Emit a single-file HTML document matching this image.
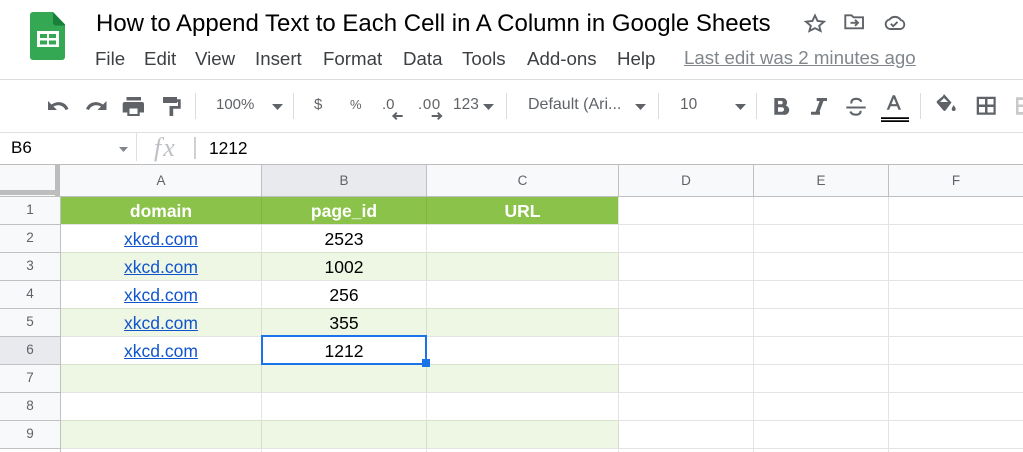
<!DOCTYPE html>
<html><head><meta charset="utf-8">
<style>
html,body{margin:0;padding:0;background:#fff}
body{width:1023px;height:452px;overflow:hidden;position:relative;font-family:"Liberation Sans",sans-serif}
.t{position:absolute;white-space:nowrap}
.b{position:absolute}
.m{top:48px;font-size:18.7px;line-height:22px;color:#3c4043}
.tb{top:95px;font-size:15px;line-height:20px;color:#5f6368}
.ch{top:165px;height:31px;line-height:31px;text-align:center;font-size:13.5px;color:#5f6368;position:absolute;background:#f8f9fa}
.rh{left:0;width:60px;height:27px;line-height:26px;text-align:center;font-size:13.5px;color:#5f6368;position:absolute;background:#f8f9fa}
.c{position:absolute;height:27px;line-height:28px;text-align:center;font-size:17.5px;color:#000}
.l{color:#1155cc;text-decoration:underline}
.h{color:#fff;font-weight:bold}
svg{position:absolute;overflow:visible}
</style></head><body>

<svg style="left:30px;top:12px" width="36" height="49" viewBox="0 0 36 49">
<path d="M3 0H23L35 12.500V45a3 3 0 0 1-3 3H3a3 3 0 0 1-3-3V3a3 3 0 0 1 3-3z" fill="#34a853"/>
<path d="M23 0L35 12.500V13.500H26a3 3 0 0 1-3-3z" fill="#188038"/>
<path d="M7 19H29V35H7z" fill="#fff"/>
<path d="M10 22H17V26H10zM19 22H26V26H19zM10 28.500H17V32.500H10zM19 28.500H26V32.500H19z" fill="#34a853"/>
</svg>

<div class="t" style="left:96px;top:9px;font-size:24px;line-height:30px;color:#000">How to Append Text to Each Cell in A Column in Google Sheets</div>

<div class="t m" style="left:95px">File</div>
<div class="t m" style="left:144px">Edit</div>
<div class="t m" style="left:195px">View</div>
<div class="t m" style="left:255px">Insert</div>
<div class="t m" style="left:323px">Format</div>
<div class="t m" style="left:403px">Data</div>
<div class="t m" style="left:462px">Tools</div>
<div class="t m" style="left:527px">Add-ons</div>
<div class="t m" style="left:617px">Help</div>
<div class="t" style="left:684px;top:47px;font-size:18.7px;line-height:22px;color:#80868b;text-decoration:underline">Last edit was 2 minutes ago</div>

<div class="b" style="left:0;top:79px;width:1023px;height:1px;background:#dadce0"></div>

<!-- icons, absolute page coordinates -->
<svg style="left:0;top:0" width="1023" height="452" viewBox="0 0 1023 452">
<g fill="none" stroke="#5f6368" stroke-width="1.900">
<path d="M815 15.500L817.600 21 824 21.700 819.200 25.800 820.600 31 815 28.200 809.400 31 810.800 25.800 806 21.700 812.400 21z"/>
<path d="M845.300 15.300H851.500L853.500 17.300H863V28.300H845.300z"/>
<path d="M850.500 22.800H858M855 19.800l3 3-3 3"/>
<path d="M890.500 29a4.800 4.800 0 0 1-1-9.500A7 7 0 0 1 900.800 20a4.600 4.600 0 0 1-.3 9z"/>
<path d="M890.800 23.800l2.400 2.400 4.300-4.300"/>
<path d="M402.700 116H393.500M396.800 112.700L393.300 116 396.800 119.300"/>
<path d="M431.700 116H441M437.700 112.700L441.200 116 437.700 119.300"/>
</g>
<g fill="#5f6368">
<path d="M48 101V110H57L53.500 106.500C57 104.500 63 104.500 65.500 110L68.500 109C66 102 58 100 51.500 104.500Z"/>
<path d="M106.500 101V110H97.500L101 106.500C97.500 104.500 91.500 104.500 89 110L86 109C88.500 102 96.500 100 103 104.500Z"/>
<path d="M126.500 97H141V100.500H126.500z"/>
<path fill-rule="evenodd" d="M125 102H142a2 2 0 0 1 2 2v8.500h-4.300V116H127.300v-3.500H122.700V104a2 2 0 0 1 2.300-2zM129.500 108.500v5.500h8v-5.500z"/>
<path d="M163 97H177V99.300H180.700V108.700H173.200V116H169.500V106H178V102H177V103H163z"/>

<path fill-rule="evenodd" d="M774.300 98H782a4.500 4.500 0 0 1 3.900 7.500A4.700 4.700 0 0 1 783 114.700H774.300zM778 100.900V104.300H781a1.700 1.700 0 0 0 0-3.400zM778 107.200V111.700H781.800a2.200 2.200 0 0 0 0-4.500z"/>
<path d="M816.700 98H827V101H823.500L819.500 111.700H820V114.700H811V111.700H815.600L819.600 101H816.700z"/>
<path d="M846.300 106.500H865.700V108.500H846.300z"/>
<path fill-rule="evenodd" d="M886.700 109.700L892.700 95.300H895L901 109.700H898.500L897.100 106.200H890.600L889.200 109.700zM891.500 104.100H896.200L893.850 98.200z"/>
<path d="M881 117.300H909V119H881zM881 120.300H909V122H881z" fill="#000"/>
<path fill-rule="evenodd" d="M944 94L951.500 102.500 945.500 110.500A1.500 1.500 0 0 1 943.500 110.500L937 103A1.500 1.500 0 0 1 937 101L943 96zM940 102H948L944 98z"/>
<path d="M953.700 105c1 1.700 2 3 2 4a2 2 0 0 1-4 0c0-1 1-2.300 2-4z"/>
<path d="M976.700 96.700H995.700V114.700H976.700zM979 99V104.500H985V99zM987.500 99V104.500H993.500V99zM979 107V112.500H985V107zM987.500 107V112.500H993.500V107z" fill-rule="evenodd"/>
<path d="M1016 97.300H1023V100H1018.500V104.500H1023V107H1018.500V112H1023V114.700H1016z" fill="#c8c9cb"/>
</g>
<path d="M851.500 103.500C850.800 100.500 853 98.800 856 98.800c2.500 0 4.600 1 5.300 3M860.500 110.800c.5 2.400-1.800 3.900-4.500 3.900-2.800 0-4.800-1-5.700-3.200" fill="none" stroke="#5f6368" stroke-width="2.100"/>
</svg>

<!-- toolbar -->
<div class="b" style="left:195px;top:93px;width:1px;height:26px;background:#dadce0"></div>
<div class="t tb" style="left:216px">100%</div>
<svg style="left:272px;top:104px" width="11" height="6"><path d="M0 0h11L5.500 6z" fill="#5f6368"/></svg>
<div class="b" style="left:293px;top:93px;width:1px;height:26px;background:#dadce0"></div>
<div class="t tb" style="left:314px">$</div>
<div class="t tb" style="left:350px;font-size:13px">%</div>
<div class="t tb" style="left:382px">.0</div>
<div class="t tb" style="left:418px;letter-spacing:.7px">.00</div>
<div class="t tb" style="left:453px;font-size:15.500px">123</div>
<svg style="left:483px;top:104px" width="11" height="6"><path d="M0 0h11L5.500 6z" fill="#5f6368"/></svg>
<div class="b" style="left:506px;top:93px;width:1px;height:26px;background:#dadce0"></div>
<div class="t tb" style="left:528px;font-size:16px">Default (Ari...</div>
<svg style="left:635px;top:104px" width="11" height="6"><path d="M0 0h11L5.500 6z" fill="#5f6368"/></svg>
<div class="b" style="left:658px;top:93px;width:1px;height:26px;background:#dadce0"></div>
<div class="t tb" style="left:680px;font-size:15.500px">10</div>
<svg style="left:735px;top:104px" width="11" height="6"><path d="M0 0h11L5.500 6z" fill="#5f6368"/></svg>
<div class="b" style="left:756px;top:93px;width:1px;height:26px;background:#dadce0"></div>
<div class="b" style="left:920px;top:93px;width:1px;height:26px;background:#dadce0"></div>

<!-- formula bar -->
<div class="b" style="left:0;top:132px;width:1023px;height:1px;background:#e0e0e0"></div>
<div class="t" style="left:11px;top:138px;font-size:17px;line-height:20px;color:#000">B6</div>
<svg style="left:119px;top:147px" width="9" height="5"><path d="M0 0h9L4.500 5z" fill="#80868b"/></svg>
<div class="b" style="left:136px;top:133px;width:1px;height:28px;background:#e0e0e0"></div>
<div class="t" style="left:154px;top:134px;font-family:'Liberation Serif',serif;font-style:italic;font-size:26px;line-height:28px;letter-spacing:2px;color:#bdc1c6">fx</div>
<div class="b" style="left:194px;top:137px;width:2px;height:22px;background:#d0d1d2"></div>
<div class="t" style="left:209px;top:138px;font-size:17.300px;line-height:20px;color:#000">1212</div>

<!-- grid base -->
<div class="b" style="left:0;top:164px;width:1023px;height:1px;background:#bdbdbd"></div>
<div class="b" style="left:0;top:165px;width:61px;height:31px;background:#f8f9fa"></div>
<div class="ch" style="left:61px;width:200px">A</div>
<div class="ch" style="left:262px;width:164px;background:#e8eaed">B</div>
<div class="ch" style="left:427px;width:191px">C</div>
<div class="ch" style="left:619px;width:134px">D</div>
<div class="ch" style="left:754px;width:134px">E</div>
<div class="ch" style="left:889px;width:134px">F</div>
<div class="b" style="left:261px;top:165px;width:1px;height:31px;background:#c0c0c0"></div>
<div class="b" style="left:426px;top:165px;width:1px;height:31px;background:#c0c0c0"></div>
<div class="b" style="left:618px;top:165px;width:1px;height:31px;background:#c0c0c0"></div>
<div class="b" style="left:753px;top:165px;width:1px;height:31px;background:#c0c0c0"></div>
<div class="b" style="left:888px;top:165px;width:1px;height:31px;background:#c0c0c0"></div>
<div class="b" style="left:0;top:190px;width:56px;height:5px;background:#bdbdbd"></div>
<div class="b" style="left:55px;top:165px;width:5px;height:31px;background:#bdbdbd"></div>

<!-- row fills -->
<div class="b" style="left:61px;top:197px;width:558px;height:27px;background:#8bc34a"></div>
<div class="b" style="left:61px;top:253px;width:557px;height:27px;background:#eef6e4"></div>
<div class="b" style="left:61px;top:309px;width:557px;height:27px;background:#eef6e4"></div>
<div class="b" style="left:61px;top:365px;width:557px;height:27px;background:#eef6e4"></div>
<div class="b" style="left:61px;top:421px;width:557px;height:27px;background:#eef6e4"></div>

<!-- horizontal lines -->
<div class="b" style="left:61px;top:196px;width:962px;height:1px;background:#c0c0c0"></div>
<div class="b" style="left:61px;top:224px;width:962px;height:1px;background:#e2e3e3"></div>
<div class="b" style="left:61px;top:252px;width:962px;height:1px;background:#e2e3e3"></div>
<div class="b" style="left:61px;top:280px;width:962px;height:1px;background:#e2e3e3"></div>
<div class="b" style="left:61px;top:308px;width:962px;height:1px;background:#e2e3e3"></div>
<div class="b" style="left:61px;top:336px;width:962px;height:1px;background:#e2e3e3"></div>
<div class="b" style="left:61px;top:364px;width:962px;height:1px;background:#e2e3e3"></div>
<div class="b" style="left:61px;top:392px;width:962px;height:1px;background:#e2e3e3"></div>
<div class="b" style="left:61px;top:420px;width:962px;height:1px;background:#e2e3e3"></div>
<div class="b" style="left:61px;top:448px;width:962px;height:1px;background:#e2e3e3"></div>
<div class="b" style="left:61px;top:252px;width:557px;height:1px;background:#d5dfc9"></div>
<div class="b" style="left:61px;top:308px;width:557px;height:1px;background:#d5dfc9"></div>
<div class="b" style="left:61px;top:364px;width:557px;height:1px;background:#d5dfc9"></div>
<div class="b" style="left:61px;top:420px;width:557px;height:1px;background:#d5dfc9"></div>

<!-- vertical lines -->
<div class="b" style="left:261px;top:225px;width:1px;height:227px;background:#e2e3e3"></div>
<div class="b" style="left:426px;top:225px;width:1px;height:227px;background:#e2e3e3"></div>
<div class="b" style="left:618px;top:197px;width:1px;height:255px;background:#e2e3e3"></div>
<div class="b" style="left:753px;top:197px;width:1px;height:255px;background:#e2e3e3"></div>
<div class="b" style="left:888px;top:197px;width:1px;height:255px;background:#e2e3e3"></div>
<div class="b" style="left:261px;top:253px;width:1px;height:27px;background:#d5dfc9"></div>
<div class="b" style="left:426px;top:253px;width:1px;height:27px;background:#d5dfc9"></div>
<div class="b" style="left:618px;top:253px;width:1px;height:27px;background:#d5dfc9"></div>
<div class="b" style="left:261px;top:309px;width:1px;height:27px;background:#d5dfc9"></div>
<div class="b" style="left:426px;top:309px;width:1px;height:27px;background:#d5dfc9"></div>
<div class="b" style="left:618px;top:309px;width:1px;height:27px;background:#d5dfc9"></div>
<div class="b" style="left:261px;top:365px;width:1px;height:27px;background:#d5dfc9"></div>
<div class="b" style="left:426px;top:365px;width:1px;height:27px;background:#d5dfc9"></div>
<div class="b" style="left:618px;top:365px;width:1px;height:27px;background:#d5dfc9"></div>
<div class="b" style="left:261px;top:421px;width:1px;height:27px;background:#d5dfc9"></div>
<div class="b" style="left:426px;top:421px;width:1px;height:27px;background:#d5dfc9"></div>
<div class="b" style="left:618px;top:421px;width:1px;height:27px;background:#d5dfc9"></div>
<div class="b" style="left:261px;top:197px;width:1px;height:27px;background:#7fb344"></div>
<div class="b" style="left:426px;top:197px;width:1px;height:27px;background:#7fb344"></div>

<!-- row headers -->
<div class="rh" style="top:197px">1</div>
<div class="rh" style="top:225px">2</div>
<div class="rh" style="top:253px">3</div>
<div class="rh" style="top:281px">4</div>
<div class="rh" style="top:309px">5</div>
<div class="rh" style="top:337px;background:#e8eaed">6</div>
<div class="rh" style="top:365px">7</div>
<div class="rh" style="top:393px">8</div>
<div class="rh" style="top:421px">9</div>
<div class="b" style="left:0;top:196px;width:61px;height:1px;background:#c0c0c0"></div>
<div class="b" style="left:0;top:224px;width:60px;height:1px;background:#c0c0c0"></div>
<div class="b" style="left:0;top:252px;width:60px;height:1px;background:#c0c0c0"></div>
<div class="b" style="left:0;top:280px;width:60px;height:1px;background:#c0c0c0"></div>
<div class="b" style="left:0;top:308px;width:60px;height:1px;background:#c0c0c0"></div>
<div class="b" style="left:0;top:336px;width:60px;height:1px;background:#c0c0c0"></div>
<div class="b" style="left:0;top:364px;width:60px;height:1px;background:#c0c0c0"></div>
<div class="b" style="left:0;top:392px;width:60px;height:1px;background:#c0c0c0"></div>
<div class="b" style="left:0;top:420px;width:60px;height:1px;background:#c0c0c0"></div>
<div class="b" style="left:0;top:448px;width:60px;height:1px;background:#c0c0c0"></div>
<div class="b" style="left:60px;top:197px;width:1px;height:255px;background:#c0c0c0"></div>

<!-- cells -->
<div class="c h" style="left:61px;top:197px;width:200px">domain</div>
<div class="c h" style="left:262px;top:197px;width:164px">page_id</div>
<div class="c h" style="left:427px;top:197px;width:191px">URL</div>

<div class="c" style="left:61px;top:225px;width:200px"><span class="l">xkcd.com</span></div>
<div class="c" style="left:61px;top:253px;width:200px"><span class="l">xkcd.com</span></div>
<div class="c" style="left:61px;top:281px;width:200px"><span class="l">xkcd.com</span></div>
<div class="c" style="left:61px;top:309px;width:200px"><span class="l">xkcd.com</span></div>
<div class="c" style="left:61px;top:337px;width:200px"><span class="l">xkcd.com</span></div>

<div class="c" style="left:262px;top:225px;width:164px">2523</div>
<div class="c" style="left:262px;top:253px;width:164px">1002</div>
<div class="c" style="left:262px;top:281px;width:164px">256</div>
<div class="c" style="left:262px;top:309px;width:164px">355</div>
<div class="c" style="left:262px;top:337px;width:164px">1212</div>

<!-- selection -->
<div class="b" style="left:261px;top:335px;width:166px;height:30px;box-sizing:border-box;border:2px solid #1a73e8"></div>
<div class="b" style="left:422px;top:359px;width:8px;height:8px;background:#1a73e8"></div>

</body></html>
